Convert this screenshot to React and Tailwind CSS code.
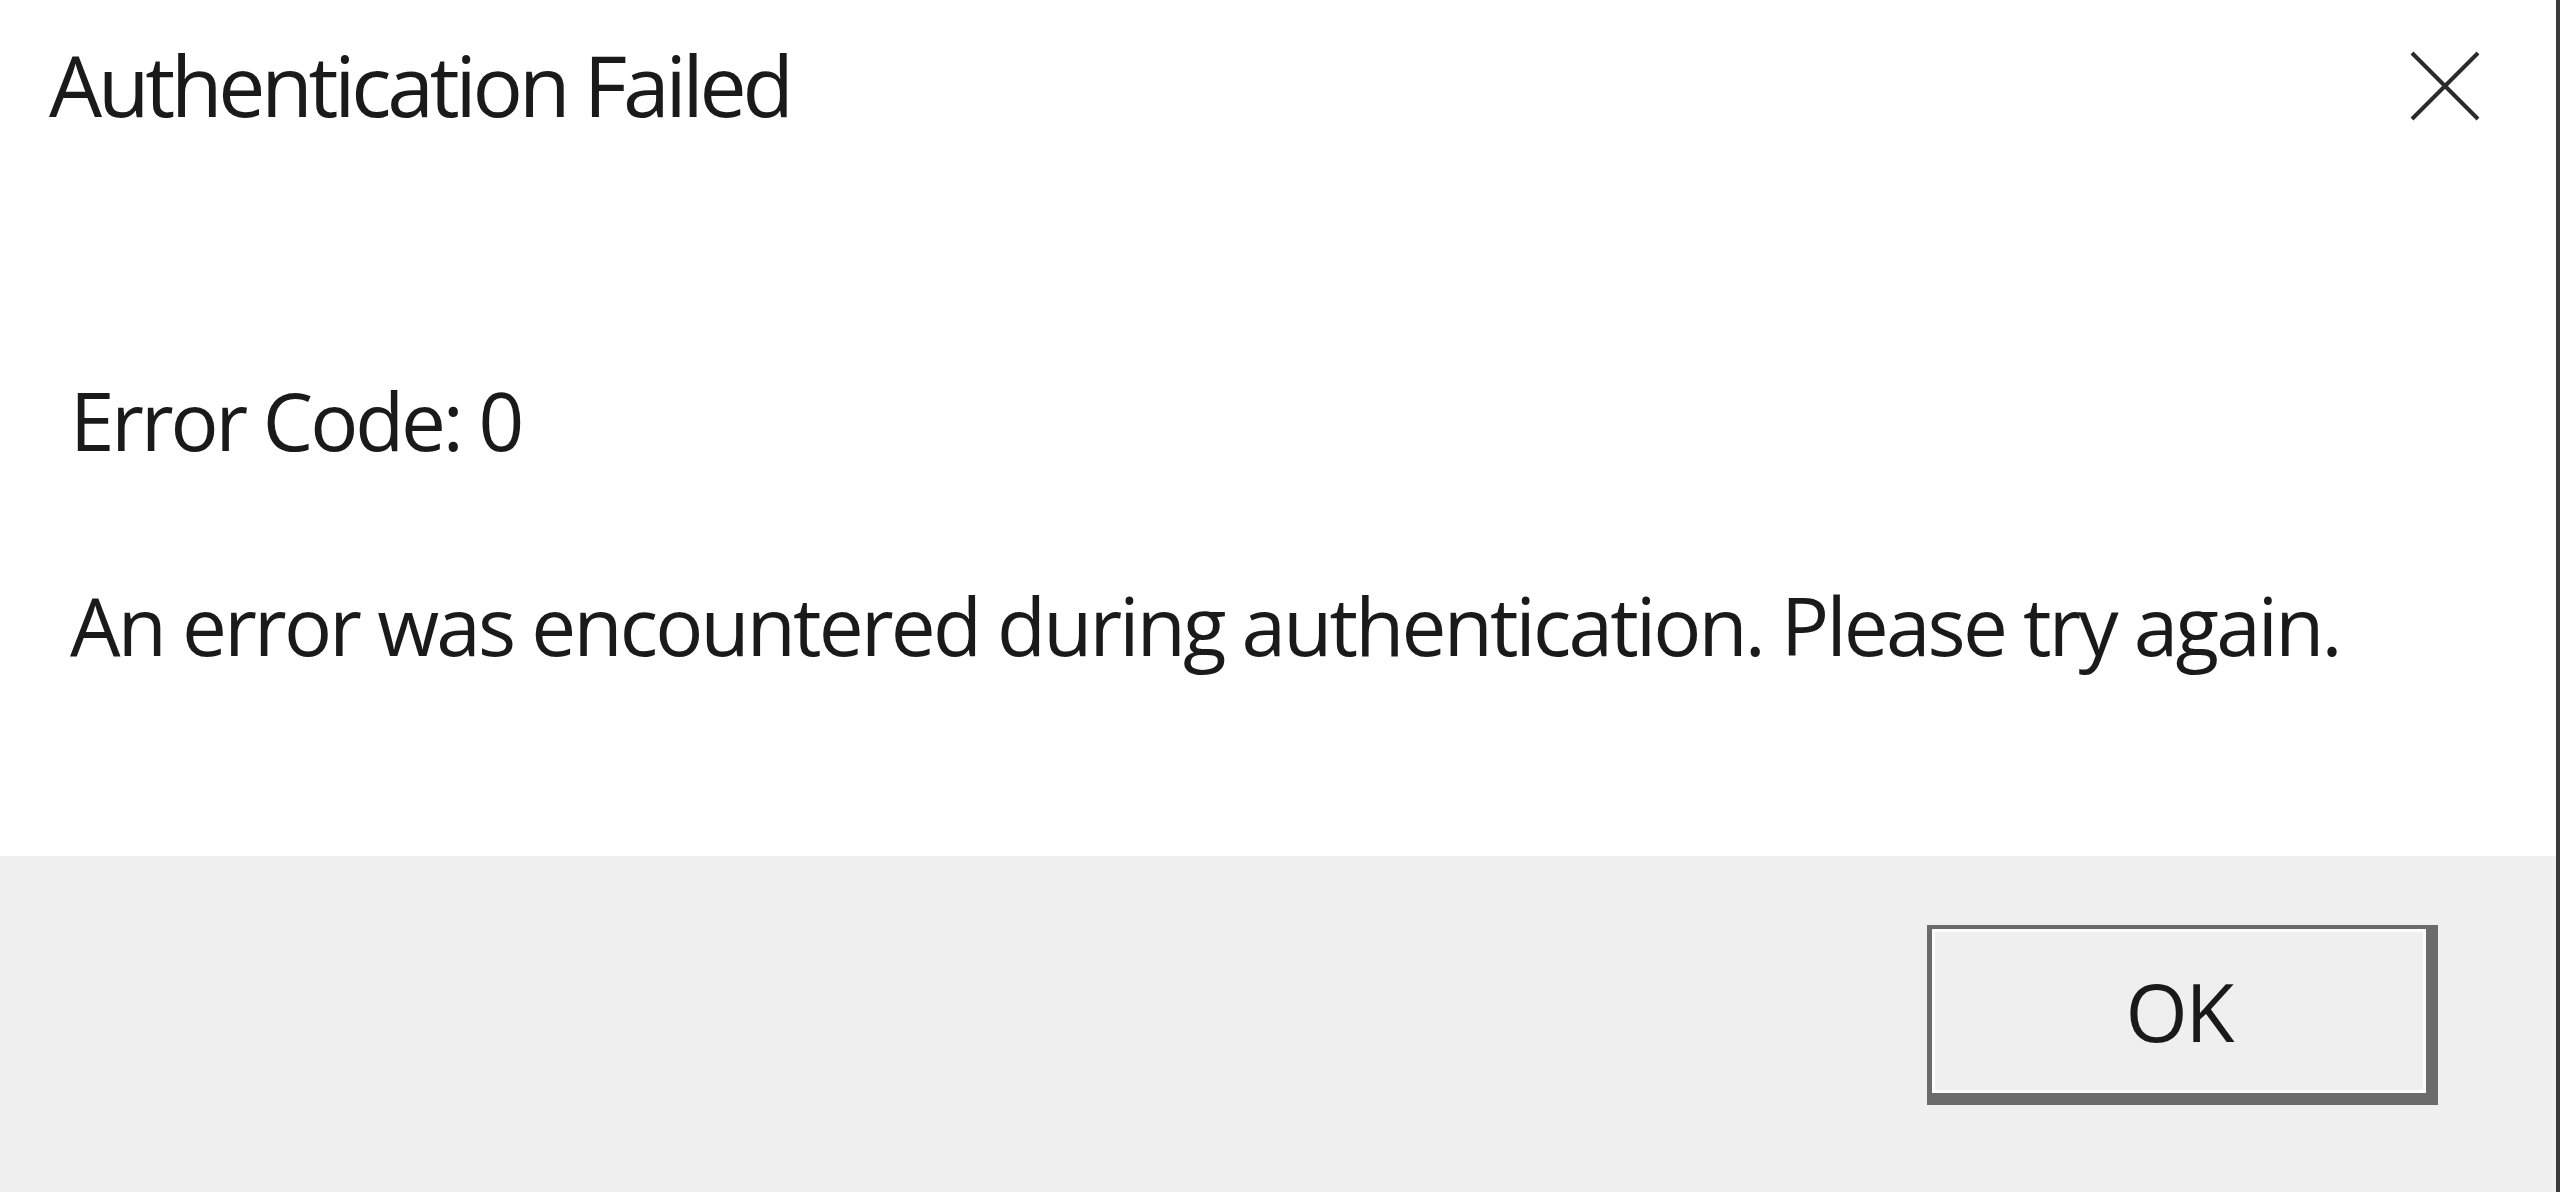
export default function App() {
  return (
    <div className="w-[2560px] h-[1192px] flex flex-col bg-white border-r-4 border-[#3a3a3a] text-[#1a1a1a] font-['Open_Sans','Noto_Sans',sans-serif]">
      {/* Body */}
      <div className="h-[856px] flex flex-col">
        <div className="flex items-start justify-between pl-[49px] pr-[76px] pt-[43px]">
          <h1 className="text-[84px] leading-none font-normal tracking-[-4.2px]">Authentication Failed</h1>
          <svg width="70" height="70" viewBox="0 0 70 70" className="mt-[8px]">
            <path d="M2 2 L68 68 M68 2 L2 68" stroke="#2b2b2b" strokeWidth="4" fill="none" />
          </svg>
        </div>
        <div className="pl-[70px] mt-[253px]">
          <p className="text-[80px] leading-none tracking-[-3.1px]">Error Code: 0</p>
          <p className="text-[80px] leading-none mt-[125px] tracking-[-2.8px]">
            An error was encountered during authentication. Please try again.
          </p>
        </div>
      </div>

      {/* Footer */}
      <div className="flex-1 bg-[#f0f0f0] flex justify-end items-start pt-[69px] pr-[118px]">
        <button className="w-[511px] h-[180px] flex items-center justify-center bg-[#efefef] border-t-4 border-l-[5px] border-r-[12px] border-b-[12px] border-[#6b6b6b] shadow-[inset_0_0_0_3px_#fcfcfc] text-[80px] leading-none tracking-[-2px]">
          OK
        </button>
      </div>
    </div>
  );
}
